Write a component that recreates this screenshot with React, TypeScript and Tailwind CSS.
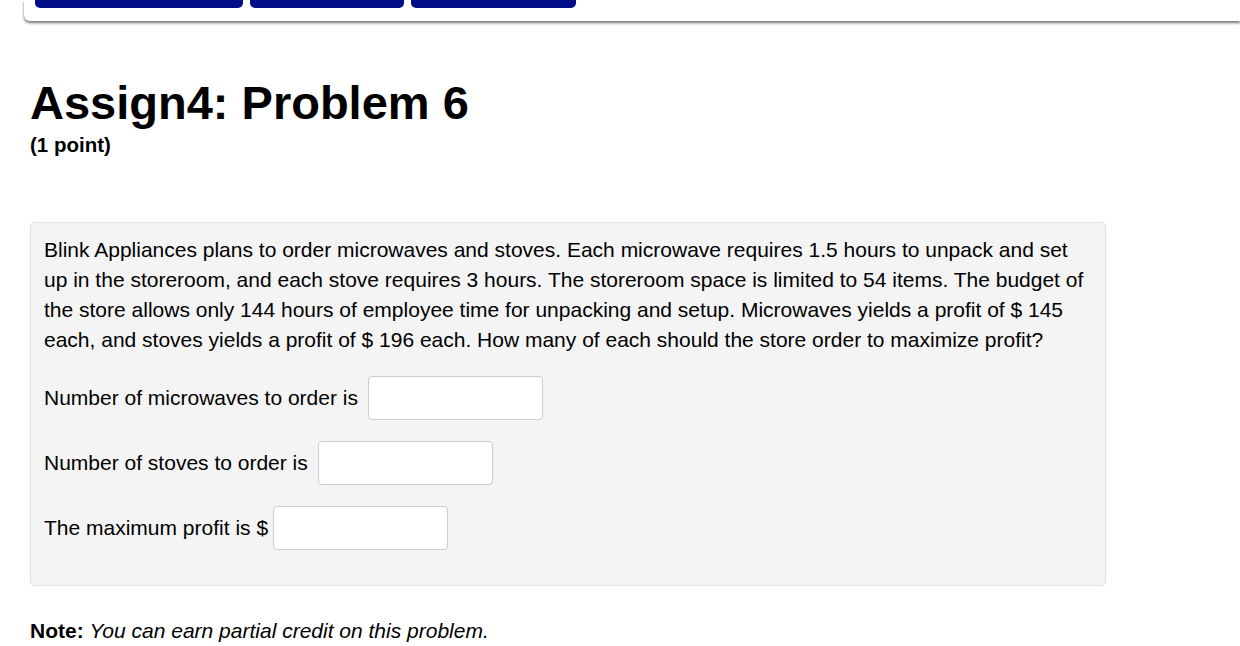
export default function App() {
  return (
    <div className="min-h-screen bg-white text-black" style={{ fontFamily: '"Liberation Sans", Arial, sans-serif' }}>
      <div className="ml-[24px] h-[21px] rounded-bl-[6px] bg-white pl-[11px] shadow-[0_2px_3px_rgba(0,0,0,0.55)]">
        <div className="flex gap-[7px]">
          <div className="h-[8px] w-[208px] rounded-b-[5px] bg-[#000d86]" />
          <div className="h-[8px] w-[154px] rounded-b-[5px] bg-[#000d86]" />
          <div className="h-[8px] w-[165px] rounded-b-[5px] bg-[#000d86]" />
        </div>
      </div>

      <main className="px-[30px]">
        <h1 className="mt-[54px] text-[47px] font-bold leading-[56px]">Assign4: Problem 6</h1>
        <p className="mt-[2px] text-[20.5px] font-bold leading-[24px]">(1 point)</p>

        <div className="mt-[65px] w-[1076px] rounded-[4px] border border-[#e3e3e3] bg-[#f4f4f4] px-[13px] pt-[12px] pb-[35px] text-[21px] leading-[30px]">
          <p className="whitespace-nowrap">
            Blink Appliances plans to order microwaves and stoves. Each microwave requires 1.5 hours to unpack and set
            <br />
            up in the storeroom, and each stove requires 3 hours. The storeroom space is limited to 54 items. The budget of
            <br />
            the store allows only 144 hours of employee time for unpacking and setup. Microwaves yields a profit of $ 145
            <br />
            each, and stoves yields a profit of $ 196 each. How many of each should the store order to maximize profit?
          </p>
          <div className="mt-[21px] flex items-center gap-[10px]">
            <span>Number of microwaves to order is</span>
            <input className="h-[44px] w-[175px] rounded-[4px] border border-[#cccccc] bg-white" />
          </div>
          <div className="mt-[21px] flex items-center gap-[10px]">
            <span>Number of stoves to order is</span>
            <input className="h-[44px] w-[175px] rounded-[4px] border border-[#cccccc] bg-white" />
          </div>
          <div className="mt-[21px] flex items-center gap-[5px]">
            <span>The maximum profit is $</span>
            <input className="h-[44px] w-[175px] rounded-[4px] border border-[#cccccc] bg-white" />
          </div>
        </div>

        <p className="mt-[33px] text-[21px] leading-[24px]">
          <b>Note:</b> <i>You can earn partial credit on this problem.</i>
        </p>
      </main>
    </div>
  );
}
